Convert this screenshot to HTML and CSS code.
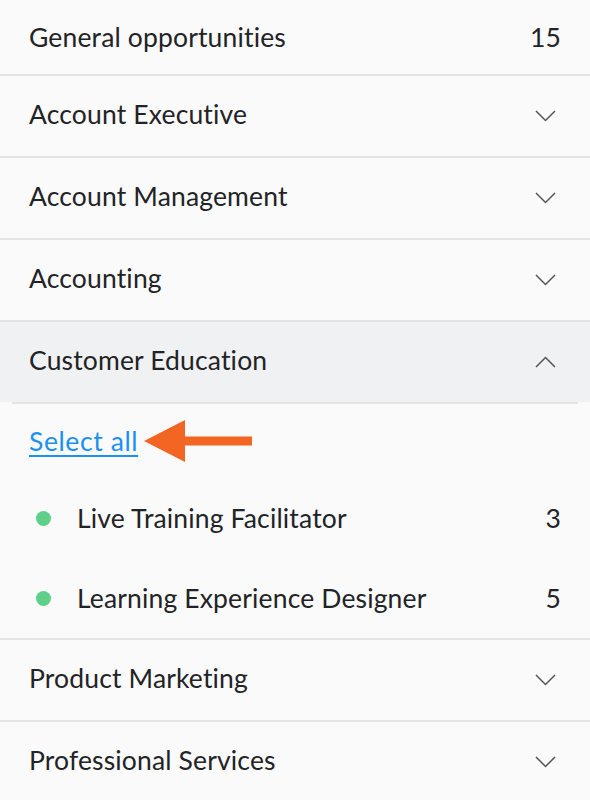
FILE: index.html
```html
<!DOCTYPE html>
<html lang="en">
<head>
<meta charset="utf-8">
<title>Departments</title>
<link rel="stylesheet" href="styles.css">
</head>
<body>
<div class="list">
  <div class="row first">
    <span class="label">General opportunities</span>
    <span class="count">15</span>
  </div>
  <div class="row">
    <span class="label">Account Executive</span>
    <svg class="chev" width="21" height="12" viewBox="0 0 21 12"><path d="M1 1 L10.5 10.5 L20 1" fill="none" stroke="#555" stroke-width="1.5"/></svg>
  </div>
  <div class="row">
    <span class="label">Account Management</span>
    <svg class="chev" width="21" height="12" viewBox="0 0 21 12"><path d="M1 1 L10.5 10.5 L20 1" fill="none" stroke="#555" stroke-width="1.5"/></svg>
  </div>
  <div class="row">
    <span class="label">Accounting</span>
    <svg class="chev" width="21" height="12" viewBox="0 0 21 12"><path d="M1 1 L10.5 10.5 L20 1" fill="none" stroke="#555" stroke-width="1.5"/></svg>
  </div>
  <div class="row open">
    <span class="label">Customer Education</span>
    <svg class="chev" width="21" height="12" viewBox="0 0 21 12"><path d="M1 11 L10.5 1.5 L20 11" fill="none" stroke="#555" stroke-width="1.5"/></svg>
  </div>
  <div class="panel">
    <div class="inset-line"></div>
    <div class="select-row">
      <a class="select-all" href="#">Select all</a>
      <svg class="arrow" width="110" height="42" viewBox="0 0 110 42"><path d="M0 21 L41 0 L41 16.5 L108 16.5 L108 25.5 L41 25.5 L41 42 Z" fill="#f26522"/></svg>
    </div>
    <div class="item">
      <span class="dot"></span>
      <span class="label">Live Training Facilitator</span>
      <span class="count">3</span>
    </div>
    <div class="item">
      <span class="dot"></span>
      <span class="label">Learning Experience Designer</span>
      <span class="count">5</span>
    </div>
  </div>
  <div class="row">
    <span class="label">Product Marketing</span>
    <svg class="chev" width="21" height="12" viewBox="0 0 21 12"><path d="M1 1 L10.5 10.5 L20 1" fill="none" stroke="#555" stroke-width="1.5"/></svg>
  </div>
  <div class="row">
    <span class="label">Professional Services</span>
    <svg class="chev" width="21" height="12" viewBox="0 0 21 12"><path d="M1 1 L10.5 10.5 L20 1" fill="none" stroke="#555" stroke-width="1.5"/></svg>
  </div>
</div>
</body>
</html>
```
FILE: styles.css
```css
html, body {
  margin: 0;
  padding: 0;
  background: #fafafa;
}
body {
  font-family: "Lato", "Open Sans", sans-serif;
  font-size: 26.5px;
  letter-spacing: 0.15px;
  color: #222326;
  overflow: hidden;
}
.row {
  display: flex;
  align-items: center;
  justify-content: space-between;
  height: 80px;
  padding: 0 29px;
  border-bottom: 2px solid #e4e4e4;
}
.row .label,
.row .count {
  margin-top: -4px;
}
.row.first {
  height: 74px;
}
.row.first .label,
.row.first .count {
  margin-top: 0;
}
.row .chev {
  margin-right: 5px;
}
.row.open {
  background: #f0f1f3;
  border-bottom: none;
}
.panel {
  border-bottom: 2px solid #e4e4e4;
}
.inset-line {
  height: 2px;
  margin: 0 12px;
  background: #e4e4e4;
}
.select-row {
  display: flex;
  align-items: center;
  gap: 6px;
  height: 74px;
  padding: 0 29px;
}
.select-all {
  color: #1a90f0;
  text-decoration: underline;
  text-underline-offset: 4px;
  text-decoration-thickness: 2px;
  margin-top: -1px;
  letter-spacing: 0.6px;
}
.item {
  display: flex;
  align-items: center;
  height: 80px;
  padding: 0 29px 0 36px;
}
.dot {
  width: 15px;
  height: 15px;
  border-radius: 50%;
  background: #5fcf8b;
  margin-right: 26px;
}
.item .label {
  flex: 1;
}
```
